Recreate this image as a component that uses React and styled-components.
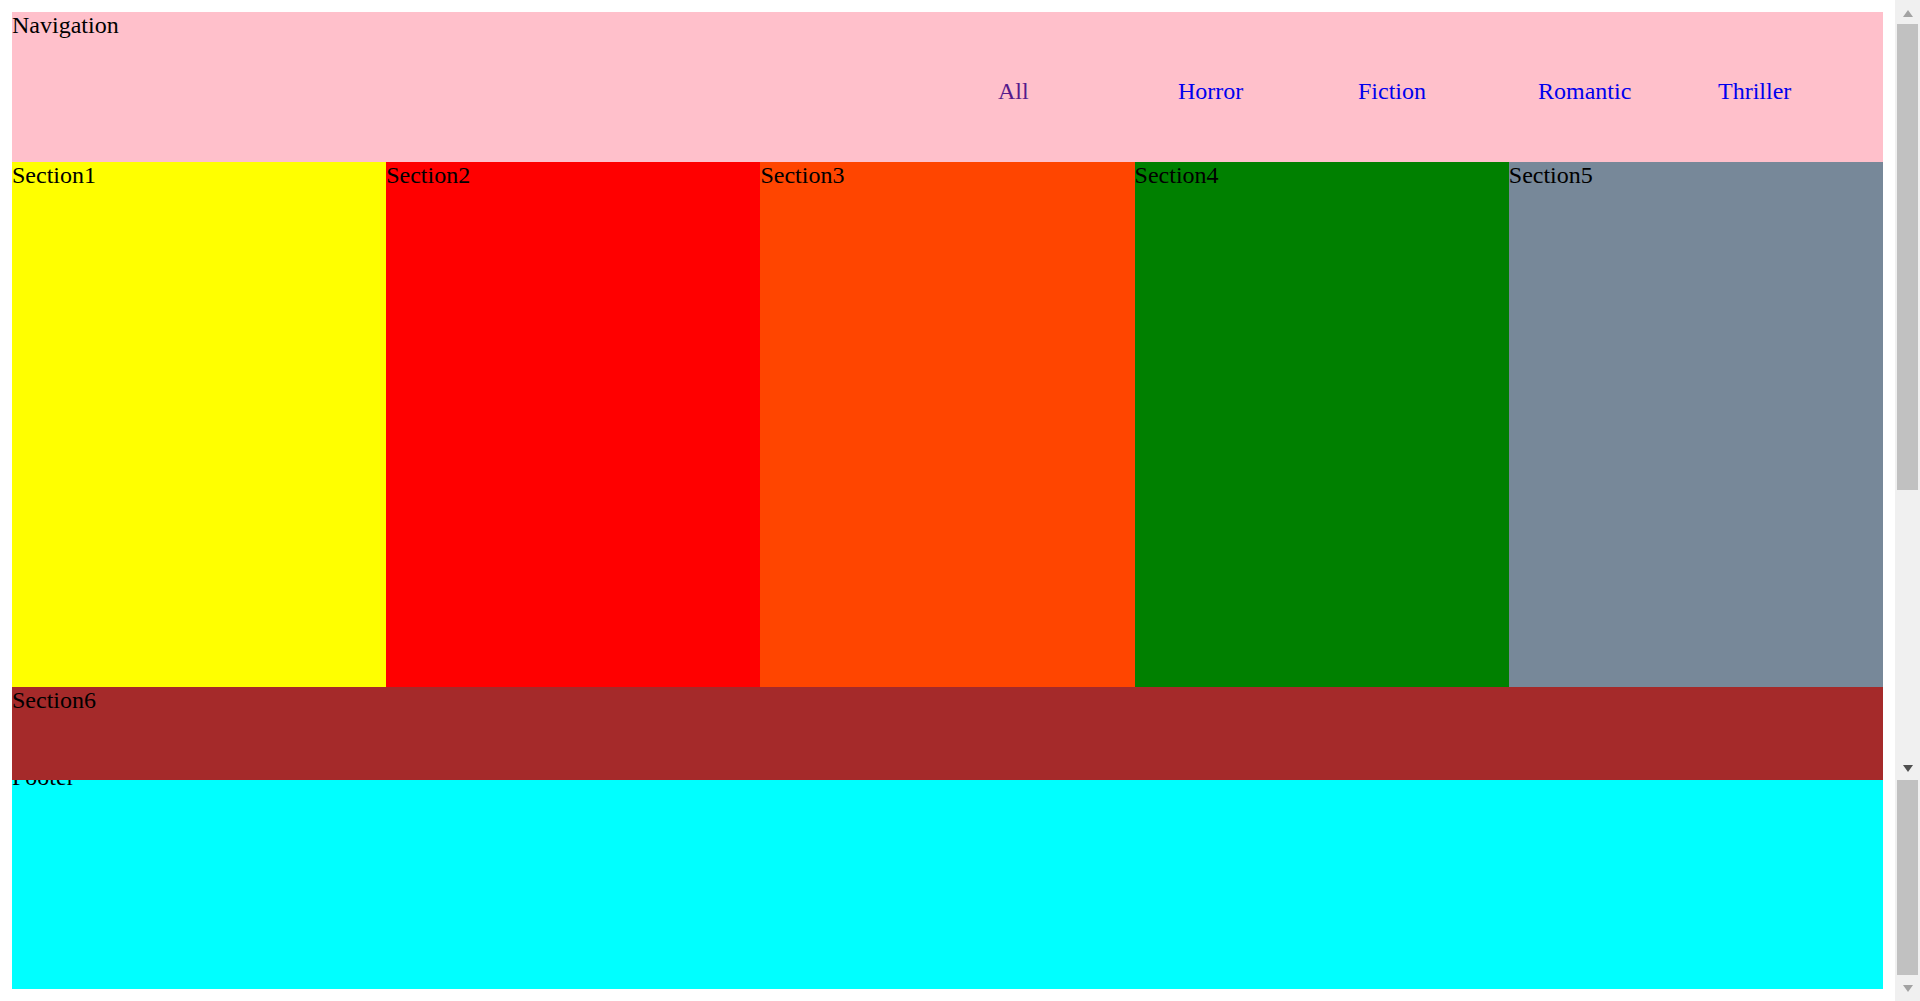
import React from 'react';
import styled, { createGlobalStyle } from 'styled-components';

const GlobalStyle = createGlobalStyle`
  body {
    margin: 12px 37px 12px 12px;
    font-family: "Liberation Serif", "Times New Roman", serif;
    font-size: 24px;
    color: #000;
  }
`;

const Nav = styled.nav`
  display: flex;
  height: 150px;
  background: pink;
`;

const NavList = styled.ul`
  display: grid;
  grid-template-columns: repeat(5, 180px);
  list-style: none;
  margin: 0 -15px 0 auto;
  padding: 66px 0 0;
`;

const NavLink = styled.a`
  color: ${(p) => (p.$visited ? '#551a8b' : '#0000ee')};
  text-decoration: none;
`;

const Sections = styled.div`
  display: grid;
  grid-template-columns: repeat(5, 1fr);
  height: 525px;
`;

const Section = styled.section`
  background: ${(p) => p.$bg};
`;

const WideSection = styled.section`
  position: relative;
  z-index: 1;
  height: 93px;
  background: brown;
`;

const Footer = styled.footer`
  margin-top: -16px;
  height: 225px;
  background: linear-gradient(to bottom, transparent 16px, aqua 16px);
`;

/* window scrollbar as it shows in the screenshot */
const ScrollBar = styled.div`
  position: fixed;
  top: 0;
  right: 0;
  bottom: 0;
  width: 25px;
  display: flex;
  flex-direction: column;
  background: #f0f0f0;
`;

const ArrowButton = styled.div`
  height: ${(p) => p.$h}px;
  flex: none;
  display: flex;
  align-items: ${(p) => (p.$up ? 'flex-start' : 'center')};
  justify-content: center;
  padding-top: ${(p) => (p.$up ? 10 : 0)}px;
  box-sizing: border-box;
  &::after {
    content: '';
    width: 0;
    height: 0;
    border-left: 5.5px solid transparent;
    border-right: 5.5px solid transparent;
    ${(p) =>
      p.$up
        ? `border-bottom: 7px solid ${p.$color};`
        : `border-top: 7px solid ${p.$color};`}
  }
`;

const Thumb = styled.div`
  flex: none;
  height: ${(p) => p.$h}px;
  margin: 0 2px;
  background: #c1c1c1;
`;

const Track = styled.div`
  flex: 1;
`;

const links = ['All', 'Horror', 'Fiction', 'Romantic', 'Thriller'];
const sections = [
  ['Section1', 'yellow'],
  ['Section2', 'red'],
  ['Section3', 'orangered'],
  ['Section4', 'green'],
  ['Section5', 'lightslategray'],
];

const App = () => {
  return (
    <>
      <GlobalStyle />
      <Nav>
        <div>Navigation</div>
        <NavList>
          {links.map((l, i) => (
            <li key={l}>
              <NavLink href="#" $visited={i === 0}>
                {l}
              </NavLink>
            </li>
          ))}
        </NavList>
      </Nav>
      <Sections>
        {sections.map(([name, bg]) => (
          <Section key={name} $bg={bg}>
            {name}
          </Section>
        ))}
      </Sections>
      <WideSection>Section6</WideSection>
      <Footer>Footer</Footer>

      <ScrollBar>
        <ArrowButton $up $h={24} $color="#a3a3a3" />
        <Thumb $h={466} />
        <Track />
        <ArrowButton $h={24} $color="#505050" />
        <Thumb $h={195} />
        <ArrowButton $h={26} $color="#a3a3a3" />
      </ScrollBar>
    </>
  );
};

export default App;
